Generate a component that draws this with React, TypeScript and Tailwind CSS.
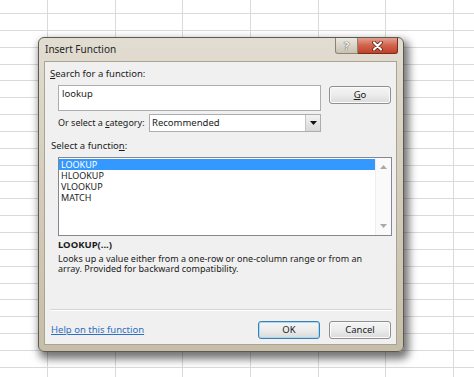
import React from 'react';

const COL_WIDTHS = ['w-[48px]', 'w-[68px]', 'w-[67px]', 'w-[68px]', 'w-[68px]', 'w-[67px]', 'w-[68px]', 'w-[68px]'];
const ROWS = Array.from({ length: 23 }, (_, i) => i);
const FUNCTIONS = ['LOOKUP', 'HLOOKUP', 'VLOOKUP', 'MATCH'];

const font = { fontFamily: '"Noto Sans", "Segoe UI", sans-serif' };

function SheetGrid() {
  return (
    <div className="flex flex-col">
      {ROWS.map(r => (
        <div
          key={r}
          className={`flex shrink-0 border-b border-[#dadada] ${r === 0 ? 'h-[14px]' : 'h-[16.85px]'}`}
        >
          {COL_WIDTHS.map((w, c) => (
            <div key={c} className={`${w} shrink-0 h-full border-r border-[#dadada]`} />
          ))}
        </div>
      ))}
    </div>
  );
}

function PushButton({ children, primary }: { children: React.ReactNode; primary?: boolean }) {
  return (
    <div
      className={`w-[62px] h-[18px] rounded-[3px] border flex items-center justify-center text-[9.5px] text-[#1b1b1b] bg-gradient-to-b from-[#f5f5f5] via-[#ececec] to-[#dadada] ${
        primary
          ? 'border-[#3c7fb1] shadow-[inset_0_0_0_1px_#a6d9f4]'
          : 'border-[#8e8f8f] shadow-[inset_0_0_0_1px_#fbfbfb]'
      }`}
    >
      {children}
    </div>
  );
}

export default function App() {
  return (
    <div className="relative w-[474px] h-[377px] overflow-hidden bg-white" style={font}>
      <SheetGrid />

      {/* dialog window */}
      <div className="absolute left-[38px] top-[37px] w-[366px] h-[315px] rounded-[6px] border border-[#5d5a52] bg-gradient-to-b from-[#e2ddd1] via-[#d3ccbb] to-[#c6bea8] shadow-[3px_5px_9px_2px_rgba(0,0,0,0.55)] flex flex-col">
        {/* title bar */}
        <div className="h-[23px] shrink-0 flex items-start">
          <div className="ml-[6px] mt-[5px] text-[10px] leading-[13px] text-[#252525]">Insert Function</div>
          <div className="ml-auto mr-[5px] flex">
            <div className="w-[23px] h-[16px] rounded-bl-[3px] border border-t-0 border-[#8a8478] bg-gradient-to-b from-[#ece8df] to-[#c9c2b1] flex items-center justify-center">
              <span className="text-[11px] leading-none font-bold text-[#f4f4f4] [text-shadow:0_0_1px_#555,0_0_1px_#555]">?</span>
            </div>
            <div className="w-[40px] h-[16px] rounded-br-[3px] border border-l-0 border-t-0 border-[#7a2b1e] bg-gradient-to-b from-[#e3a08f] via-[#d1634b] to-[#c0412a] flex items-center justify-center">
              <svg width="13" height="10" viewBox="0 0 13 10">
                <path d="M3 1.5 L10 8.5 M10 1.5 L3 8.5" stroke="#5a1d12" strokeWidth="3.8" strokeLinecap="round" />
                <path d="M3 1.5 L10 8.5 M10 1.5 L3 8.5" stroke="#ffffff" strokeWidth="2.2" strokeLinecap="round" />
              </svg>
            </div>
          </div>
        </div>

        {/* client area */}
        <div className="ml-[5px] w-[353px] h-[284px] border border-[#aaa392] bg-[#f0f0f0] flex flex-col text-[9.5px] text-[#1b1b1b]">
          <div className="mt-[6px] ml-[5px] h-[12px] leading-[12px]">
            <span className="underline">S</span>earch for a function:
          </div>

          <div className="mt-[5px] ml-[13px] flex items-start">
            <div className="w-[263px] h-[26px] border border-[#abadb3] bg-white pl-[3px] pt-[2px] leading-[12px]">
              lookup
            </div>
            <div className="ml-[8px] mt-[1px]">
              <PushButton>
                <span className="underline">G</span>o
              </PushButton>
            </div>
          </div>

          <div className="mt-[3px] ml-[13px] h-[18px] flex items-center">
            <div className="w-[91px] shrink-0 whitespace-nowrap text-[9px] leading-[12px]">
              Or select a <span className="underline">c</span>ategory:
            </div>
            <div className="w-[172px] h-[18px] border border-[#abadb3] bg-white flex items-center">
              <div className="pl-[2px] flex-1 leading-[12px]">Recommended</div>
              <div className="w-[15px] h-full border-l border-[#c5c5c5] bg-gradient-to-b from-[#f3f3f3] to-[#d8d8d8] flex items-center justify-center">
                <svg width="7" height="4" viewBox="0 0 7 4">
                  <path d="M0 0 H7 L3.5 4 Z" fill="#111" />
                </svg>
              </div>
            </div>
          </div>

          <div className="mt-[8px] ml-[6px] h-[12px] leading-[12px]">
            Select a functio<span className="underline">n</span>:
          </div>

          <div className="mt-[5px] ml-[13px] w-[334px] h-[79px] border border-[#828790] bg-white flex">
            <div className="flex-1 pt-[1px] text-[9px]">
              {FUNCTIONS.map((f, i) => (
                <div
                  key={f}
                  className={`h-[11px] leading-[11px] pl-[2px] ${i === 0 ? 'bg-[#3399ff] text-white' : ''}`}
                >
                  {f}
                </div>
              ))}
            </div>
            <div className="w-[16px] h-full bg-[#fafafa] border-l border-[#eeeeee] flex flex-col items-center justify-between py-[7px]">
              <svg width="7" height="4" viewBox="0 0 7 4">
                <path d="M3.5 0 L7 4 H0 Z" fill="#a9a9a9" />
              </svg>
              <svg width="7" height="4" viewBox="0 0 7 4">
                <path d="M0 0 H7 L3.5 4 Z" fill="#a9a9a9" />
              </svg>
            </div>
          </div>

          <div className="mt-[3px] ml-[13px] h-[12px] leading-[12px] font-bold">LOOKUP(...)</div>
          <div className="mt-[3px] ml-[13px] text-[9px] leading-[10px]">
            Looks up a value either from a one-row or one-column range or from an
            <br />
            array. Provided for backward compatibility.
          </div>

          <div className="mt-[35px] ml-[5px] w-[342px] h-[2px] border-t border-[#d5d5d5] border-b border-b-white" />

          <div className="mt-[10px] h-[18px] flex items-center">
            <div className="ml-[6px] leading-[12px] text-[#2f6fc0] underline">Help on this function</div>
            <div className="ml-auto mr-[5px] flex gap-[9px]">
              <PushButton primary>OK</PushButton>
              <PushButton>Cancel</PushButton>
            </div>
          </div>
        </div>
      </div>
    </div>
  );
}
